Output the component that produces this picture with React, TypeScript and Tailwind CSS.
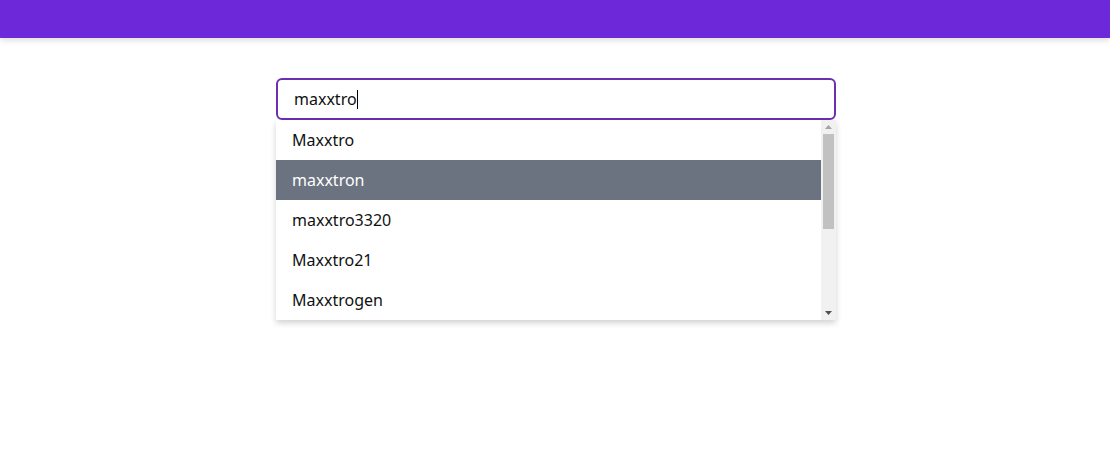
import React from "react";

const items = ["Maxxtro", "maxxtron", "maxxtro3320", "Maxxtro21", "Maxxtrogen"];

export default function App() {
  return (
    <div className="min-h-[460px] bg-white" style={{ fontFamily: '"Noto Sans", "Open Sans", sans-serif' }}>
      <header className="h-[38px] bg-[#6d28d9] shadow-[0_2px_6px_rgba(0,0,0,0.15)]" />
      <div className="flex justify-center pt-[40px]">
        <div className="w-[560px] ml-[2px]">
          <div className="h-[42px] rounded-[6px] border-2 border-[#6b2fb0] flex items-center pl-[16px] text-[16px] text-[#111]">
            <span>maxxtro</span>
            <span className="w-px h-[19px] bg-black" />
          </div>
          <div className="flex h-[200px] bg-white shadow-[0_3px_6px_rgba(0,0,0,0.18)]">
            <ul className="flex-1">
              {items.map((it, i) => (
                <li
                  key={it}
                  className={
                    "h-[40px] flex items-center pl-[16px] text-[16px] " +
                    (i === 1 ? "bg-[#6b7280] text-white" : "text-[#111]")
                  }
                >
                  {it}
                </li>
              ))}
            </ul>
            <div className="w-[15px] bg-[#f1f1f1] flex flex-col items-center">
              <div className="h-[14px] flex items-center justify-center">
                <svg width="7" height="4" viewBox="0 0 7 4"><polygon points="3.5,0 7,4 0,4" fill="#a3a3a3" /></svg>
              </div>
              <div className="w-[11px] h-[95px] bg-[#c1c1c1]" />
              <div className="flex-1" />
              <div className="h-[14px] flex items-center justify-center">
                <svg width="7" height="4" viewBox="0 0 7 4"><polygon points="0,0 7,0 3.5,4" fill="#505050" /></svg>
              </div>
            </div>
          </div>
        </div>
      </div>
    </div>
  );
}
